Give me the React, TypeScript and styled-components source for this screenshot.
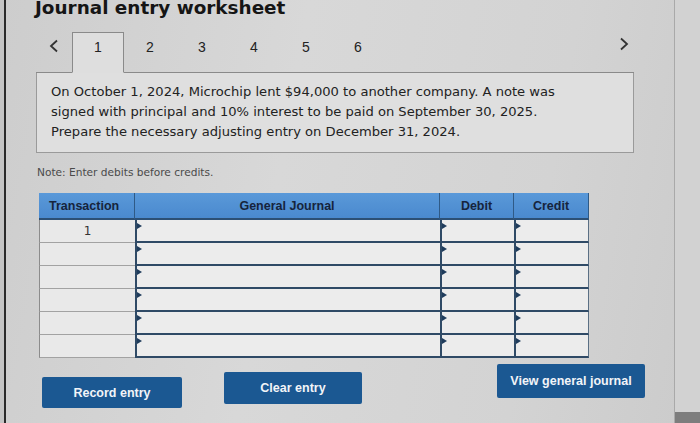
import styled, { createGlobalStyle } from 'styled-components';

const GlobalStyle = createGlobalStyle`
  html, body {
    margin: 0;
    padding: 0;
    background: #cfcfcf;
  }
`;

const Screen = styled.div`
  width: 700px;
  height: 423px;
  overflow: hidden;
  display: flex;
  background: linear-gradient(100deg, #cdcdcd 0%, #d8d8d8 40%, #d3d3d3 75%, #cbcbcb 100%);
  font-family: "DejaVu Sans", Verdana, sans-serif;
  color: #1e1e1e;
`;

const Bezel = styled.div`
  width: 4px;
  flex: none;
  border-right: 2px solid #2a2a2a;
  background: #c4c4c4;
`;

const Main = styled.div`
  width: 668px;
  flex: none;
  display: flex;
  flex-direction: column;
  border-right: 1px solid #a9a9a9;
`;

const Side = styled.div`
  flex: 1;
  background: #d2d2d2;
  display: flex;
  flex-direction: column;
  justify-content: flex-end;
`;

const SideBase = styled.div`
  height: 11px;
  background: #7d7d7d;
`;

const Title = styled.h1`
  margin: -3px 0 0 29px;
  font-size: 18.4px;
  line-height: 22px;
  font-weight: bold;
  color: #151515;
`;

const Worksheet = styled.div`
  margin: 13px 0 0 30px;
  width: 598px;
`;

const TabStrip = styled.div`
  display: flex;
  align-items: stretch;
  height: 40px;
  border-bottom: 1px solid #8a8a8a;
`;

const Arrow = styled.div<{ $right?: boolean }>`
  width: 36px;
  display: flex;
  align-items: flex-start;
  justify-content: center;
  margin-left: ${p => (p.$right ? 'auto' : '0')};
  margin-right: ${p => (p.$right ? '-8px' : '0')};
  padding-top: ${p => (p.$right ? '5px' : '7px')};
`;

const Tab = styled.div<{ $active?: boolean }>`
  width: 52px;
  box-sizing: border-box;
  display: flex;
  align-items: flex-start;
  justify-content: center;
  font-family: "Liberation Sans", Arial, sans-serif;
  font-size: 14px;
  padding-top: 6px;
  color: #222;
  margin-bottom: -1px;
  border: 1px solid ${p => (p.$active ? '#8a8a8a' : 'transparent')};
  border-bottom: 1px solid ${p => (p.$active ? '#dedede' : 'transparent')};
  background: ${p => (p.$active ? '#dedede' : 'transparent')};
`;

const Panel = styled.div`
  border: 1px solid #9a9a9a;
  border-top: none;
  background: #dfdfdf;
  padding: 9px 14px 10px 14px;
  font-size: 13.1px;
  line-height: 20px;
  color: #222;
  white-space: nowrap;
`;

const Note = styled.div`
  margin: 13px 0 0 1px;
  font-size: 10.6px;
  color: #4a4a4a;
`;

const Grid = styled.div`
  margin: 15px 0 0 3px;
  width: 550px;
  display: grid;
  grid-template-columns: 96px 305px 74px 75px;
  grid-auto-rows: 23px;
  grid-template-rows: 27px;
`;

const Head = styled.div<{ $align?: string }>`
  background: linear-gradient(180deg, #5a99d9, #4a89ce);
  border-right: 1px solid #2f5a86;
  border-bottom: 2px solid #2c4f74;
  display: flex;
  align-items: center;
  justify-content: ${p => p.$align || 'center'};
  padding-left: ${p => (p.$align === 'flex-start' ? '10px' : '0')};
  font-family: "Liberation Sans", Arial, sans-serif;
  font-weight: bold;
  font-size: 12.5px;
  color: #16243c;
  &:last-of-type {
    border-right: none;
  }
`;

const IdCell = styled.div`
  background: #e9e9e9;
  border-left: 1px solid #8c8c8c;
  border-bottom: 1px solid #a2a2a2;
  display: flex;
  align-items: center;
  justify-content: center;
  font-size: 12px;
  color: #333;
`;

const Entry = styled.div`
  position: relative;
  background: #ececec;
  border-left: 2px solid #2f4a66;
  border-bottom: 2px solid #2f4a66;
  &:nth-child(4n) {
    border-right: 1px solid #5a6f84;
  }
`;

const Marker = styled.span`
  position: absolute;
  left: 0;
  top: 3px;
  width: 0;
  height: 0;
  border-top: 3px solid transparent;
  border-bottom: 3px solid transparent;
  border-left: 5px solid #1f3c5c;
`;

const Actions = styled.div`
  margin-top: 6px;
  padding: 0 29px 0 36px;
  display: flex;
  align-items: flex-start;
  gap: 42px;
`;

const Button = styled.button<{ $top: number; $w: number; $h: number; $push?: boolean }>`
  margin-top: ${p => p.$top}px;
  margin-left: ${p => (p.$push ? 'auto' : '0')};
  width: ${p => p.$w}px;
  height: ${p => p.$h}px;
  border: none;
  border-radius: 2px;
  background: #1b5892;
  color: #f2f4f8;
  font-family: "Liberation Sans", Arial, sans-serif;
  font-weight: bold;
  font-size: 12.5px;
  padding: 0;
`;

function Chevron({ right }: { right?: boolean }) {
  return (
    <svg width="10" height="14" viewBox="0 0 10 14">
      <path
        d={right ? 'M2 1.5 L8 7 L2 12.5' : 'M8 1.5 L2 7 L8 12.5'}
        fill="none"
        stroke="#333"
        strokeWidth="1.8"
      />
    </svg>
  );
}

const rows = [1, 2, 3, 4, 5, 6];

export default function App() {
  return (
    <>
      <GlobalStyle />
      <Screen>
        <Bezel />
        <Main>
          <Title>Journal entry worksheet</Title>
          <Worksheet>
            <TabStrip>
              <Arrow><Chevron /></Arrow>
              {[1, 2, 3, 4, 5, 6].map(n => (
                <Tab key={n} $active={n === 1}>{n}</Tab>
              ))}
              <Arrow $right><Chevron right /></Arrow>
            </TabStrip>
            <Panel>
              On October 1, 2024, Microchip lent $94,000 to another company. A note was
              <br />
              signed with principal and 10% interest to be paid on September 30, 2025.
              <br />
              Prepare the necessary adjusting entry on December 31, 2024.
            </Panel>
            <Note>Note: Enter debits before credits.</Note>
            <Grid>
              <Head $align="flex-start">Transaction</Head>
              <Head>General Journal</Head>
              <Head>Debit</Head>
              <Head>Credit</Head>
              {rows.map(r => (
                <>
                  <IdCell key={`t${r}`}>{r === 1 ? '1' : ''}</IdCell>
                  <Entry key={`g${r}`}><Marker /></Entry>
                  <Entry key={`d${r}`}><Marker /></Entry>
                  <Entry key={`c${r}`}><Marker /></Entry>
                </>
              ))}
            </Grid>
          </Worksheet>
          <Actions>
            <Button $top={13} $w={140} $h={31}>Record entry</Button>
            <Button $top={8} $w={138} $h={32}>Clear entry</Button>
            <Button $top={0} $w={148} $h={34} $push>View general journal</Button>
          </Actions>
        </Main>
        <Side>
          <SideBase />
        </Side>
      </Screen>
    </>
  );
}
